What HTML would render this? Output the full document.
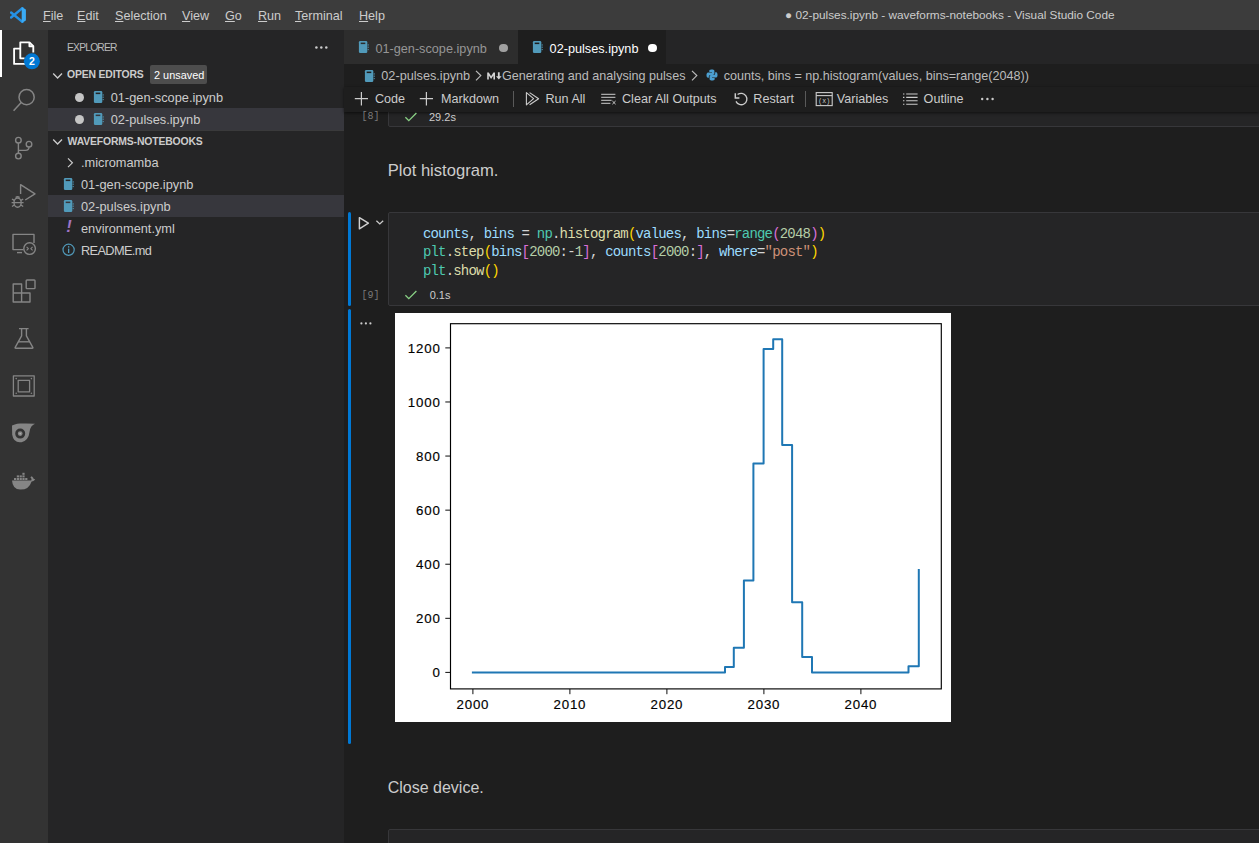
<!DOCTYPE html>
<html><head><meta charset="utf-8">
<style>
*{margin:0;padding:0;box-sizing:border-box}
html,body{width:1259px;height:843px;overflow:hidden;background:#1e1e1e;font-family:"Liberation Sans",sans-serif;color:#cccccc}
.a{position:absolute;white-space:pre;line-height:1}
#titlebar{position:absolute;left:0;top:0;width:1259px;height:30px;background:#3c3c3c}
#activity{position:absolute;left:0;top:30px;width:48px;height:813px;background:#333333}
#sidebar{position:absolute;left:48px;top:30px;width:296px;height:813px;background:#252526}
#tabs{position:absolute;left:344px;top:30px;width:915px;height:34px;background:#252526}
.m{font-size:12.6px;color:#cccccc}
.u{text-decoration:underline;text-underline-offset:1px}
.sb{font-size:12.8px;color:#cccccc}
.hdr{font-size:10.4px;font-weight:bold;color:#cccccc;letter-spacing:-0.15px}
.row{position:absolute;left:48px;width:296px;height:22px}
.tb{font-size:12.6px;color:#cccccc}
.mono{font-family:"Liberation Mono",monospace;font-size:12.65px}
</style></head><body>

<!-- TITLE BAR -->
<div id="titlebar"></div>
<svg class="a" style="left:10px;top:7px" width="16" height="16" viewBox="0 0 16 16">
  <path d="M1.1 5.5 L12.4 14.9 M1.1 10.5 L12.4 1.1" stroke="#2592e6" stroke-width="2.5" stroke-linecap="round"/>
  <path d="M11.7 0.2 L15.2 1.9 Q15.9 2.3 15.9 3 V13 Q15.9 13.7 15.2 14.1 L11.7 15.8 Z" fill="#3aabf5"/>
</svg>
<span class="a m" style="left:43px;top:9.8px"><span class="u">F</span>ile</span>
<span class="a m" style="left:77px;top:9.8px"><span class="u">E</span>dit</span>
<span class="a m" style="left:115px;top:9.8px"><span class="u">S</span>election</span>
<span class="a m" style="left:182px;top:9.8px"><span class="u">V</span>iew</span>
<span class="a m" style="left:225px;top:9.8px"><span class="u">G</span>o</span>
<span class="a m" style="left:258px;top:9.8px"><span class="u">R</span>un</span>
<span class="a m" style="left:295px;top:9.8px"><span class="u">T</span>erminal</span>
<span class="a m" style="left:359px;top:9.8px"><span class="u">H</span>elp</span>
<span class="a" style="left:785px;top:9.8px;font-size:11.8px;color:#cccccc">● 02-pulses.ipynb - waveforms-notebooks - Visual Studio Code</span>

<!-- ACTIVITY BAR -->
<div id="activity"></div>
<div class="a" style="left:0;top:30px;width:2px;height:47px;background:#ffffff"></div>
<svg class="a" style="left:0;top:0" width="48" height="843" viewBox="0 0 48 843" fill="none" stroke-linejoin="round">
  <!-- explorer (active) -->
  <g stroke="#ffffff" stroke-width="1.85" stroke-linejoin="round">
    <path d="M20.2 48.6 H14.1 V63.9 H25"/>
    <path d="M24.6 58.3 H20.3 V42.3 H29.4 L33.3 46.2 V52.5"/>
    <path d="M29.4 42.3 V46.2 H33.3"/>
  </g>
  <circle cx="31.9" cy="61.3" r="8" fill="#0078d4"/>
  <text x="31.9" y="65" font-family="Liberation Sans" font-size="10.5" font-weight="bold" fill="#ffffff" text-anchor="middle">2</text>
  <!-- search -->
  <g stroke="#858585" stroke-width="1.5">
    <circle cx="26.6" cy="97.2" r="7.6"/>
    <path d="M21.2 102.6 L13.6 110.8"/>
  </g>
  <!-- scm -->
  <g stroke="#858585" stroke-width="1.4">
    <circle cx="18.4" cy="140.2" r="2.8"/>
    <circle cx="29" cy="144.2" r="2.8"/>
    <circle cx="18.4" cy="156.1" r="2.8"/>
    <path d="M18.4 143 V153.3"/>
    <path d="M29 147 Q29 150.4 25.5 150.4 H18.4"/>
  </g>
  <!-- debug -->
  <g stroke="#858585" stroke-width="1.4">
    <path d="M20.6 194 V184.6 L35 193.8 L25.2 200"/>
    <ellipse cx="17.6" cy="202.6" rx="3.6" ry="4.6"/>
    <path d="M14 202.6 H21.2 M12 199 L14.2 200.4 M23.2 199 L21 200.4 M12 206.5 L14.2 205 M23.2 206.5 L21 205 M11.6 202.6 H14 M21.2 202.6 H23.6 M15.6 197.5 Q17.6 196 19.6 197.5"/>
  </g>
  <!-- remote -->
  <g stroke="#858585" stroke-width="1.4">
    <path d="M23.5 249.6 H13 V234.4 H34 V243"/>
    <path d="M17 252.6 H22"/>
    <circle cx="29.6" cy="248.6" r="5.8"/>
    <path d="M26.6 246.8 L28.4 248.6 L26.6 250.4 M32.6 246.8 L30.8 248.6 L32.6 250.4" stroke-width="1.1"/>
  </g>
  <!-- extensions -->
  <g stroke="#858585" stroke-width="1.4">
    <path d="M13.2 284 H21.6 V302 H13.2 Z M21.6 293 H30 V302 H21.6 M13.2 293 H21.6"/>
    <rect x="26.2" y="280" width="8.8" height="8.6" rx="0.8"/>
  </g>
  <!-- testing -->
  <g stroke="#858585" stroke-width="1.4">
    <path d="M19 328.6 H28.6 M21.6 328.6 V335.8 L15.2 347.4 Q14.8 348.2 15.8 348.2 H32.2 Q33.2 348.2 32.8 347.4 L26.4 335.8 V328.6"/>
    <path d="M18.2 341.8 H29.8"/>
  </g>
  <!-- square -->
  <g stroke="#858585" stroke-width="1.3">
    <rect x="13.4" y="375.8" width="20.8" height="20.2"/>
    <rect x="18.2" y="380.4" width="11.4" height="11.4"/>
  </g>
  <g fill="#858585">
    <circle cx="16.2" cy="378.6" r="0.8"/><circle cx="31.4" cy="378.6" r="0.8"/><circle cx="16.2" cy="393.2" r="0.8"/><circle cx="31.4" cy="393.2" r="0.8"/>
  </g>
  <!-- owl -->
  <path d="M12 425.6 L14.8 424.6 Q17 423.6 20 423.6 Q27.5 423.2 35 423.8 Q30.5 425.6 29.6 431.5 Q28.6 440.5 21.6 442.2 Q13.6 443.4 12.2 434.8 Z" fill="#858585"/>
  <circle cx="20.2" cy="433.6" r="3.7" fill="none" stroke="#333333" stroke-width="2.6"/>
  <circle cx="20.2" cy="433.6" r="0.9" fill="#b0b0b0"/>
  <!-- docker -->
  <g fill="#858585">
    <path d="M12 480.6 H31.2 Q32.4 479 30.4 477.2 L31.8 476.2 Q33.6 477.6 33.8 479 Q35 478.8 35.2 479.4 Q33.6 481.2 31.6 481.4 Q29 489.6 20.6 489.6 Q12.6 489.8 12 480.6 Z"/>
    <rect x="14" y="478" width="2.2" height="2"/><rect x="16.8" y="478" width="2.2" height="2"/><rect x="19.6" y="478" width="2.2" height="2"/><rect x="22.4" y="478" width="2.2" height="2"/><rect x="25.2" y="478" width="2.2" height="2"/>
    <rect x="16.8" y="475.4" width="2.2" height="2"/><rect x="19.6" y="475.4" width="2.2" height="2"/><rect x="22.4" y="475.4" width="2.2" height="2"/>
    <rect x="22.4" y="472.8" width="2.2" height="2"/>
  </g>
</svg>

<!-- SIDEBAR -->
<div id="sidebar"></div>
<span class="a" style="left:67px;top:42.6px;font-size:10.3px;letter-spacing:-0.8px;color:#bbbbbb">EXPLORER</span>
<svg class="a" style="left:314px;top:45px" width="15" height="5"><circle cx="2.4" cy="2.4" r="1.25" fill="#cccccc"/><circle cx="7.3" cy="2.4" r="1.25" fill="#cccccc"/><circle cx="12.3" cy="2.4" r="1.25" fill="#cccccc"/></svg>
<!-- open editors header -->
<svg class="a" style="left:52px;top:70.6px" width="12" height="10"><path d="M1.2 2.6 L5.6 7 L10 2.6" stroke="#cccccc" stroke-width="1.35" fill="none"/></svg>
<span class="a hdr" style="left:67px;top:70.1px">OPEN EDITORS</span>
<div class="a" style="left:150px;top:65.2px;width:57px;height:18.4px;background:#4d4d4d;border-radius:2px"></div>
<span class="a" style="left:154px;top:69.8px;font-size:10.9px;color:#ffffff">2 unsaved</span>
<div class="row" style="top:108px;background:#37373d"></div>
<div class="a" style="left:74.7px;top:92.5px;width:9px;height:9px;border-radius:50%;background:#c5c5c5"></div>
<div class="a" style="left:74.7px;top:114.5px;width:9px;height:9px;border-radius:50%;background:#c5c5c5"></div>
<svg class="a" style="left:93px;top:90px" width="12" height="14" viewBox="0 0 12 14"><rect x="0.9" y="1" width="8.4" height="12" rx="1.3" fill="#519aba"/><rect x="2.7" y="2.6" width="4.6" height="1.5" fill="#252526"/><circle cx="10.2" cy="4.9" r="0.65" fill="#519aba"/><circle cx="10.2" cy="7.2" r="0.65" fill="#519aba"/><circle cx="10.2" cy="9.6" r="0.65" fill="#519aba"/></svg>
<svg class="a" style="left:93px;top:112px" width="12" height="14" viewBox="0 0 12 14"><rect x="0.9" y="1" width="8.4" height="12" rx="1.3" fill="#519aba"/><rect x="2.7" y="2.6" width="4.6" height="1.5" fill="#37373d"/><circle cx="10.2" cy="4.9" r="0.65" fill="#519aba"/><circle cx="10.2" cy="7.2" r="0.65" fill="#519aba"/><circle cx="10.2" cy="9.6" r="0.65" fill="#519aba"/></svg>
<span class="a sb" style="left:110.7px;top:92.4px">01-gen-scope.ipynb</span>
<span class="a sb" style="left:110.7px;top:114.4px">02-pulses.ipynb</span>
<!-- workspace header -->
<div class="a" style="left:48px;top:130px;width:296px;height:1px;background:#3a3a3b"></div>
<svg class="a" style="left:52px;top:137px" width="12" height="10"><path d="M1.2 2.6 L5.6 7 L10 2.6" stroke="#cccccc" stroke-width="1.35" fill="none"/></svg>
<span class="a hdr" style="left:67.6px;top:137px">WAVEFORMS-NOTEBOOKS</span>
<div class="row" style="top:195px;background:#37373d"></div>
<svg class="a" style="left:66px;top:157px" width="10" height="12"><path d="M2 1.4 L6.4 5.8 L2 10.2" stroke="#cccccc" stroke-width="1.2" fill="none"/></svg>
<span class="a sb" style="left:81px;top:156.6px">.micromamba</span>
<svg class="a" style="left:63px;top:177px" width="12" height="14" viewBox="0 0 12 14"><rect x="0.9" y="1" width="8.4" height="12" rx="1.3" fill="#519aba"/><rect x="2.7" y="2.6" width="4.6" height="1.5" fill="#252526"/><circle cx="10.2" cy="4.9" r="0.65" fill="#519aba"/><circle cx="10.2" cy="7.2" r="0.65" fill="#519aba"/><circle cx="10.2" cy="9.6" r="0.65" fill="#519aba"/></svg>
<span class="a sb" style="left:81px;top:178.6px">01-gen-scope.ipynb</span>
<svg class="a" style="left:63px;top:199px" width="12" height="14" viewBox="0 0 12 14"><rect x="0.9" y="1" width="8.4" height="12" rx="1.3" fill="#519aba"/><rect x="2.7" y="2.6" width="4.6" height="1.5" fill="#37373d"/><circle cx="10.2" cy="4.9" r="0.65" fill="#519aba"/><circle cx="10.2" cy="7.2" r="0.65" fill="#519aba"/><circle cx="10.2" cy="9.6" r="0.65" fill="#519aba"/></svg>
<span class="a sb" style="left:81px;top:200.6px">02-pulses.ipynb</span>
<span class="a" style="left:66.3px;top:218px;font-size:16.5px;font-weight:bold;font-style:italic;color:#a074c4">!</span>
<span class="a sb" style="left:81px;top:222.6px">environment.yml</span>
<svg class="a" style="left:62.3px;top:243.2px" width="14" height="14"><circle cx="6.6" cy="6.8" r="5.6" stroke="#519aba" stroke-width="1.2" fill="none"/><rect x="6" y="5.6" width="1.3" height="4.4" fill="#519aba"/><circle cx="6.65" cy="3.9" r="0.8" fill="#519aba"/></svg>
<span class="a sb" style="left:81px;top:244.6px;letter-spacing:-0.65px">README.md</span>

<!-- EDITOR -->
<div id="tabs"></div>
<div class="a" style="left:344px;top:30px;width:174px;height:34px;background:#2d2d2d"></div>
<div class="a" style="left:518px;top:30px;width:148px;height:34px;background:#1e1e1e"></div>
<svg class="a" style="left:358px;top:40px" width="12" height="14" viewBox="0 0 12 14"><rect x="0.9" y="1" width="8.4" height="12" rx="1.3" fill="#519aba"/><rect x="2.7" y="2.6" width="4.6" height="1.5" fill="#2d2d2d"/><circle cx="10.2" cy="4.9" r="0.65" fill="#519aba"/><circle cx="10.2" cy="7.2" r="0.65" fill="#519aba"/><circle cx="10.2" cy="9.6" r="0.65" fill="#519aba"/></svg>
<span class="a" style="left:375.4px;top:42.5px;font-size:12.7px;color:#969696">01-gen-scope.ipynb</span>
<div class="a" style="left:499px;top:43.6px;width:8.6px;height:8.6px;border-radius:50%;background:#a0a0a0"></div>
<svg class="a" style="left:532px;top:40px" width="12" height="14" viewBox="0 0 12 14"><rect x="0.9" y="1" width="8.4" height="12" rx="1.3" fill="#519aba"/><rect x="2.7" y="2.6" width="4.6" height="1.5" fill="#1e1e1e"/><circle cx="10.2" cy="4.9" r="0.65" fill="#519aba"/><circle cx="10.2" cy="7.2" r="0.65" fill="#519aba"/><circle cx="10.2" cy="9.6" r="0.65" fill="#519aba"/></svg>
<span class="a" style="left:549.6px;top:42.5px;font-size:12.7px;color:#ffffff">02-pulses.ipynb</span>
<div class="a" style="left:648px;top:43.6px;width:8.6px;height:8.6px;border-radius:50%;background:#ffffff"></div>

<!-- breadcrumbs -->
<svg class="a" style="left:364px;top:69px" width="12" height="14" viewBox="0 0 12 14"><rect x="0.9" y="1" width="8.4" height="12" rx="1.3" fill="#519aba"/><rect x="2.7" y="2.6" width="4.6" height="1.5" fill="#1e1e1e"/><circle cx="10.2" cy="4.9" r="0.65" fill="#519aba"/><circle cx="10.2" cy="7.2" r="0.65" fill="#519aba"/><circle cx="10.2" cy="9.6" r="0.65" fill="#519aba"/></svg>
<span class="a" style="left:381.3px;top:69.8px;font-size:12.7px;color:#bbbbbb">02-pulses.ipynb</span>
<svg class="a" style="left:474px;top:70px" width="10" height="12"><path d="M2 0.8 L6.8 5.6 L2 10.4" stroke="#bbbbbb" stroke-width="1.2" fill="none"/></svg>
<svg class="a" style="left:486px;top:71px" width="17" height="10" viewBox="0 0 17 10"><path d="M1.2 8.4 V1.4 H2.8 L5.1 5.2 L7.4 1.4 H9 V8.4 H7.4 V4.4 L5.1 8 L2.8 4.4 V8.4 Z" fill="#d4d4d4"/><path d="M11.9 1.2 H13.7 V5.2 H15.6 L12.8 8.6 L10 5.2 H11.9 Z" fill="#d4d4d4"/></svg>
<span class="a" style="left:502px;top:69.8px;font-size:12.6px;color:#bbbbbb">Generating and analysing pulses</span>
<svg class="a" style="left:690px;top:70px" width="10" height="12"><path d="M2 0.8 L6.8 5.6 L2 10.4" stroke="#bbbbbb" stroke-width="1.2" fill="none"/></svg>
<svg class="a" style="left:705.6px;top:69px" width="12" height="12" viewBox="0 0 13 13"><path d="M6.4 0.6 C3.4 0.6 3.6 1.9 3.6 1.9 V3.3 H6.5 V3.8 H2.4 C2.4 3.8 0.5 3.6 0.5 6.6 C0.5 9.6 2.1 9.4 2.1 9.4 H3.1 V8 C3.1 8 3 6.4 4.7 6.4 H7.5 C7.5 6.4 9.1 6.4 9.1 4.9 V2.3 C9.1 2.3 9.3 0.6 6.4 0.6 Z" fill="#4c9fd0"/><path d="M6.6 12.4 C9.6 12.4 9.4 11.1 9.4 11.1 V9.7 H6.5 V9.2 H10.6 C10.6 9.2 12.5 9.4 12.5 6.4 C12.5 3.4 10.9 3.6 10.9 3.6 H9.9 V5 C9.9 5 10 6.6 8.3 6.6 H5.5 C5.5 6.6 3.9 6.6 3.9 8.1 V10.7 C3.9 10.7 3.7 12.4 6.6 12.4 Z" fill="#4c9fd0"/></svg>
<span class="a" style="left:723.7px;top:69.8px;font-size:12.6px;color:#bbbbbb">counts, bins = np.histogram(values, bins=range(2048))</span>

<!-- toolbar -->
<div class="a" style="left:388px;top:100px;width:900px;height:27px;border:1px solid #37373a;border-radius:2px;background:#252526"></div>
<div class="a" style="left:344px;top:87px;width:915px;height:24.5px;background:#1e1e1e;box-shadow:0 1px 3px rgba(0,0,0,0.6)"></div>
<svg class="a" style="left:354px;top:91px" width="16" height="16"><path d="M7.4 1 V14.4 M0.8 7.7 H14" stroke="#cccccc" stroke-width="1.2"/></svg>
<span class="a tb" style="left:375px;top:93.4px">Code</span>
<svg class="a" style="left:419px;top:91px" width="16" height="16"><path d="M7.4 1 V14.4 M0.8 7.7 H14" stroke="#cccccc" stroke-width="1.2"/></svg>
<span class="a tb" style="left:441px;top:93.4px">Markdown</span>
<div class="a" style="left:513px;top:91px;width:1px;height:16px;background:#5a5a5a"></div>
<svg class="a" style="left:525px;top:91px" width="16" height="16"><path d="M1.4 1.6 L8.6 7.7 L1.4 13.8 Z M4.6 1.6 L13.6 7.7 L4.6 13.8" stroke="#cccccc" stroke-width="1.1" fill="none" stroke-linejoin="round"/></svg>
<span class="a tb" style="left:545.5px;top:93.4px">Run All</span>
<svg class="a" style="left:600px;top:91px" width="17" height="16"><path d="M1.2 3.3 H15.4 M1.2 6.3 H15.4 M1.2 9.3 H11.6 M1.2 12.3 H10.4 M12.4 10 L15.6 13.2 M15.6 10 L12.4 13.2" stroke="#cccccc" stroke-width="1"/></svg>
<span class="a tb" style="left:622px;top:93.4px">Clear All Outputs</span>
<svg class="a" style="left:733px;top:91px" width="16" height="16"><path d="M4.6 3.6 A5.7 5.7 0 1 1 3 10.4" stroke="#cccccc" stroke-width="1.35" fill="none"/><path d="M2.3 2.2 V7 H6.4" stroke="#cccccc" stroke-width="1.45" fill="none"/></svg>
<span class="a tb" style="left:753.3px;top:93.4px">Restart</span>
<div class="a" style="left:805px;top:91px;width:1px;height:16px;background:#5a5a5a"></div>
<svg class="a" style="left:815px;top:91px" width="19" height="16"><rect x="1.2" y="1.6" width="16" height="13" stroke="#cccccc" stroke-width="1.1" fill="none"/><path d="M1.2 4.6 H17.2" stroke="#cccccc" stroke-width="1.1"/><text x="9.2" y="12.4" font-family="Liberation Mono" font-size="6.5" fill="#cccccc" text-anchor="middle">(x)</text></svg>
<span class="a tb" style="left:836.8px;top:93.4px">Variables</span>
<svg class="a" style="left:902px;top:91px" width="17" height="16"><path d="M4.2 3 H15.6 M4.2 6.4 H15.6 M4.2 9.8 H15.6 M4.2 13.2 H15.6" stroke="#cccccc" stroke-width="1.1"/><path d="M1 3 H2.4 M1 6.4 H2.4 M1 9.8 H2.4 M1 13.2 H2.4" stroke="#cccccc" stroke-width="1.1"/></svg>
<span class="a tb" style="left:923.6px;top:93.4px">Outline</span>
<svg class="a" style="left:980px;top:96px" width="16" height="6"><circle cx="2.2" cy="3" r="1.2" fill="#cccccc"/><circle cx="7.4" cy="3" r="1.2" fill="#cccccc"/><circle cx="12.6" cy="3" r="1.2" fill="#cccccc"/></svg>

<!-- previous cell status (scrolled) -->
<span class="a mono" style="left:361.5px;top:111.6px;font-size:10px;color:#7a7a7a">[8]</span>
<svg class="a" style="left:404px;top:111px" width="14" height="12"><path d="M1.4 6.2 L4.8 9.6 L12.4 2" stroke="#89d185" stroke-width="1.3" fill="none"/></svg>
<span class="a" style="left:429px;top:111.6px;font-size:11px;color:#cccccc">29.2s</span>

<!-- markdown cell -->
<span class="a" style="left:387.7px;top:162.8px;font-size:16.6px;color:#cccccc">Plot histogram.</span>

<!-- code cell -->
<div class="a" style="left:348px;top:212px;width:3px;height:94px;background:#0078d4;border-radius:1.5px"></div>
<div class="a" style="left:388px;top:212px;width:900px;height:94px;border:1px solid #37373a;border-radius:2px;background:#252526"></div>
<svg class="a" style="left:356px;top:214px" width="30" height="18"><path d="M3.4 3.6 L12.4 9.2 L3.4 14.8 Z" stroke="#d0d0d0" stroke-width="1.45" fill="none" stroke-linejoin="round"/><path d="M20.4 6.8 L23.8 10 L27.2 6.8" stroke="#cccccc" stroke-width="1.25" fill="none"/></svg>
<div class="a mono" style="left:422.9px;top:224.6px;line-height:18.6px;font-size:14px;letter-spacing:-0.81px;color:#d4d4d4"><span style="color:#9cdcfe">counts</span>, <span style="color:#9cdcfe">bins</span> = <span style="color:#4ec9b0">np</span>.<span style="color:#dcdcaa">histogram</span><span style="color:#ffd700">(</span><span style="color:#9cdcfe">values</span>, <span style="color:#9cdcfe">bins</span>=<span style="color:#4ec9b0">range</span><span style="color:#da70d6">(</span><span style="color:#b5cea8">2048</span><span style="color:#da70d6">)</span><span style="color:#ffd700">)</span>
<span style="color:#4ec9b0">plt</span>.<span style="color:#dcdcaa">step</span><span style="color:#ffd700">(</span><span style="color:#9cdcfe">bins</span><span style="color:#da70d6">[</span><span style="color:#b5cea8">2000</span>:-<span style="color:#b5cea8">1</span><span style="color:#da70d6">]</span>, <span style="color:#9cdcfe">counts</span><span style="color:#da70d6">[</span><span style="color:#b5cea8">2000</span>:<span style="color:#da70d6">]</span>, <span style="color:#9cdcfe">where</span>=<span style="color:#ce9178">"post"</span><span style="color:#ffd700">)</span>
<span style="color:#4ec9b0">plt</span>.<span style="color:#dcdcaa">show</span><span style="color:#ffd700">()</span></div>
<span class="a mono" style="left:361.5px;top:291px;font-size:10px;color:#7a7a7a">[9]</span>
<svg class="a" style="left:404px;top:289px" width="14" height="12"><path d="M1.4 6.2 L4.8 9.6 L12.4 2" stroke="#89d185" stroke-width="1.3" fill="none"/></svg>
<span class="a" style="left:429.7px;top:290.2px;font-size:11px;color:#cccccc">0.1s</span>

<!-- output -->
<div class="a" style="left:348px;top:309px;width:3px;height:435px;background:#0078d4;border-radius:1.5px"></div>
<svg class="a" style="left:359px;top:321px" width="16" height="5"><circle cx="2.4" cy="2.4" r="1.1" fill="#cccccc"/><circle cx="6.9" cy="2.4" r="1.1" fill="#cccccc"/><circle cx="11.4" cy="2.4" r="1.1" fill="#cccccc"/></svg>
<div class="a" style="left:395.3px;top:313.3px;width:555.7px;height:409px;background:#ffffff"></div>
<svg class="a" style="left:0;top:0" width="1259" height="843" viewBox="0 0 1259 843">
<rect x="450.5" y="323.7" width="490.8" height="365.2" fill="none" stroke="#000" stroke-width="1.15"/>
<path d="M445.3 672.40 H450.5 M445.3 618.32 H450.5 M445.3 564.23 H450.5 M445.3 510.15 H450.5 M445.3 456.06 H450.5 M445.3 401.98 H450.5 M445.3 347.90 H450.5 M472.90 689 V694.2 M569.90 689 V694.2 M666.90 689 V694.2 M763.90 689 V694.2 M860.90 689 V694.2 " stroke="#000" stroke-width="0.95"/>
<g font-family="Liberation Sans" font-size="13.3" letter-spacing="0.8" fill="#000" stroke="#000" stroke-width="0.15"><text x="440.6" y="677.40" text-anchor="end">0</text><text x="440.6" y="623.32" text-anchor="end">200</text><text x="440.6" y="569.23" text-anchor="end">400</text><text x="440.6" y="515.15" text-anchor="end">600</text><text x="440.6" y="461.06" text-anchor="end">800</text><text x="440.6" y="406.98" text-anchor="end">1000</text><text x="440.6" y="352.90" text-anchor="end">1200</text><text x="472.90" y="709.4" text-anchor="middle">2000</text><text x="569.90" y="709.4" text-anchor="middle">2010</text><text x="666.90" y="709.4" text-anchor="middle">2020</text><text x="763.90" y="709.4" text-anchor="middle">2030</text><text x="860.90" y="709.4" text-anchor="middle">2040</text></g>
<path d="M472.9 672.4 H725.0 V666.9 H733.8 V647.8 H743.9 V580.6 H753.4 V463.4 H763.6 V349.1 H773.2 V339.2 H782.2 V445.1 H792.1 V602.3 H802.2 V656.9 H812.0 V672.4 H908.5 V666.2 H918.8 V570.1" stroke="#1f77b4" stroke-width="2" fill="none" stroke-linejoin="round" stroke-linecap="square"/>
</svg>

<!-- close device -->
<span class="a" style="left:387.7px;top:779.5px;font-size:16px;color:#cccccc">Close device.</span>
<div class="a" style="left:388px;top:829px;width:900px;height:40px;border:1px solid #37373a;border-radius:2px;background:#252526"></div>

</body></html>
